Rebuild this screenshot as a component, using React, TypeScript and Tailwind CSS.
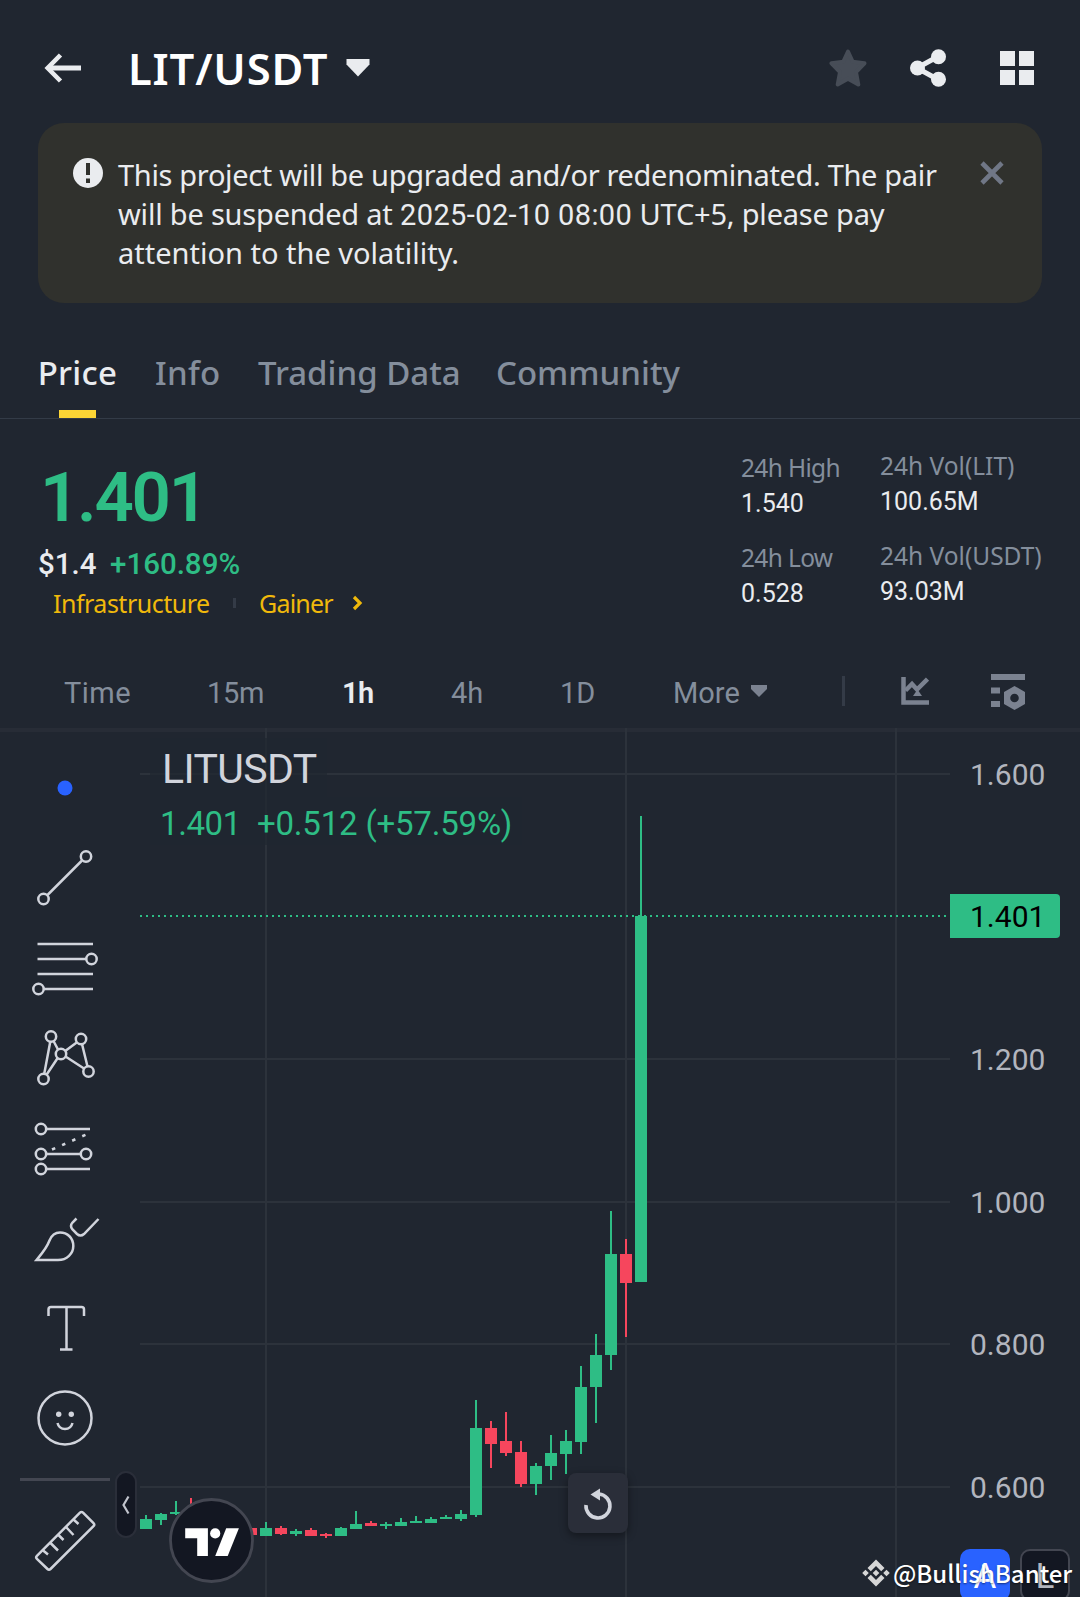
import type { ReactNode } from "react";

const UP = "#2ebd85";
const DOWN = "#f6465d";

// x centre, wick top, body top, body bottom, wick bottom, rising
type Candle = [number, number, number, number, number, boolean];

const candles: Candle[] = [
  [146, 1515, 1519, 1529, 1529, true],
  [161, 1513, 1514, 1520, 1525, true],
  [176, 1501, 1512, 1514, 1515, true],
  [191, 1498, 1508, 1514, 1516, false],
  [251, 1527, 1528, 1535, 1535, false],
  [266, 1522, 1528, 1536, 1536, true],
  [281, 1526, 1528, 1534, 1535, false],
  [296, 1529, 1531, 1534, 1536, true],
  [311, 1528, 1530, 1536, 1536, false],
  [326, 1533, 1534, 1536, 1538, false],
  [341, 1527, 1528, 1536, 1536, true],
  [356, 1511, 1524, 1529, 1529, true],
  [371, 1521, 1523, 1526, 1526, false],
  [386, 1522, 1524, 1526, 1529, true],
  [401, 1518, 1522, 1526, 1526, true],
  [416, 1516, 1521, 1523, 1523, true],
  [431, 1517, 1519, 1523, 1523, true],
  [446, 1515, 1517, 1519, 1519, true],
  [461, 1510, 1514, 1519, 1521, true],
  [476, 1400, 1428, 1515, 1517, true],
  [491, 1421, 1428, 1444, 1468, false],
  [506, 1412, 1441, 1453, 1456, false],
  [521, 1441, 1452, 1484, 1487, false],
  [536, 1463, 1466, 1484, 1495, true],
  [551, 1435, 1453, 1466, 1480, true],
  [566, 1430, 1441, 1454, 1474, true],
  [581, 1366, 1387, 1442, 1454, true],
  [596, 1334, 1355, 1387, 1423, true],
  [611, 1211, 1254, 1355, 1370, true],
  [626, 1239, 1254, 1283, 1337, false],
  [641, 816, 916, 1282, 1282, true],
];

const levels: [number, string][] = [
  [774, "1.600"],
  [1059, "1.200"],
  [1202, "1.000"],
  [1344, "0.800"],
  [1487, "0.600"],
];

function Header() {
  return (
    <header className="flex h-[123px] items-center pt-[13px] pl-11 pr-[46px]">
      <svg className="h-[30px] w-[38px]" viewBox="0 0 38 30" fill="none" stroke="#eaecef">
        <path d="M37 15H4" strokeWidth="5" />
        <path d="M16.500 2 3.700 15l12.800 13" strokeWidth="4.600" />
      </svg>
      <h1 className="ml-[46px] font-['Noto_Sans'] text-[43.5px] leading-[56px] font-semibold tracking-[0.85px] text-white">LIT/USDT</h1>
      <svg className="ml-[18px] h-[18px] w-6" viewBox="0 0 24 18">
        <path d="M.5 0h23v5.500L12 17.500.5 5.500z" fill="#eaecef" />
      </svg>
      <svg className="ml-auto h-[38px] w-[38px]" viewBox="0 0 38 38">
        <path
          d="M19 2.500 23.700 12.800 35.500 14.300 27 23 29.300 35.500 19 29.800 8.700 35.500 11 23 2.500 14.300 14.300 12.800z"
          fill="#474d57"
          stroke="#474d57"
          strokeWidth="4"
          strokeLinejoin="round"
        />
      </svg>
      <svg className="ml-[42px] h-[38px] w-[38px]" viewBox="0 0 38 38" fill="#eaecef">
        <path d="M29 7.500 8 19l21 11.500" fill="none" stroke="#eaecef" strokeWidth="5" />
        <circle cx="29.500" cy="7.700" r="7.500" />
        <circle cx="8.500" cy="19" r="7.500" />
        <circle cx="29.500" cy="30.300" r="7.500" />
      </svg>
      <div className="ml-[53px] grid grid-cols-2 gap-1">
        {[0, 1, 2, 3].map((i) => (
          <span key={i} className="size-[15px] bg-[#eaecef]" />
        ))}
      </div>
    </header>
  );
}

function Notice() {
  return (
    <section className="mx-[38px] flex h-[180px] rounded-[26px] bg-[#30312d] pl-[35px]">
      <svg className="mt-[35px] size-[30px] shrink-0" viewBox="0 0 30 30">
        <circle cx="15" cy="15" r="15" fill="#eaecef" />
        <path d="M15 5v12M15 20.500v4.500" stroke="#30312d" strokeWidth="4" />
      </svg>
      <p className="mt-[33px] ml-[15px] w-[840px] font-['Noto_Sans'] text-[29px] leading-[38.7px] whitespace-nowrap text-[#eaecef]">
        <span className="block tracking-[-0.33px]">This project will be upgraded and/or redenominated. The pair</span>
        <span className="block tracking-[-0.2px]">
          will be suspended at <span className="font-['Roboto'] tracking-[0.4px]">2025-02-10 08:00</span> UTC+5, please pay
        </span>
        <span className="block tracking-[0px]">attention to the volatility.</span>
      </p>
      <svg className="mt-[37px] ml-[21px] size-[26px] shrink-0" viewBox="0 0 26 26">
        <path d="m3 3 20 20M23 3 3 23" stroke="#707786" strokeWidth="4.600" />
      </svg>
    </section>
  );
}

function Tabs() {
  return (
    <nav className="mt-[50px] flex h-[66px] border-b border-[#333b47] pl-[38px] font-['Noto_Sans'] text-[33px] leading-10 font-medium text-[#848e9c]">
      <div className="flex w-[79px] flex-col items-center text-[#eaecef]">
        <span className="tracking-[0.3px]">Price</span>
        <span className="mt-[17px] h-2 w-[37px] bg-[#fcd535]" />
      </div>
      <span className="ml-[38px] w-[103px] tracking-[0.3px]">Info</span>
      <span className="w-[238px]">Trading Data</span>
      <span>Community</span>
    </nav>
  );
}

function Stat({ label, value, tight }: { label: string; value: string; tight?: boolean }) {
  return (
    <div className="h-[90px]">
      <div
        className={
          tight
            ? "font-['Noto_Sans'] text-[24.5px] leading-[30px] tracking-[-0.65px] whitespace-nowrap text-[#848e9c]"
            : "font-['Noto_Sans'] text-[24.5px] leading-[30px] whitespace-nowrap text-[#848e9c]"
        }
      >
        {label}
      </div>
      <div className="mt-[6px] text-[25px] leading-[30px] text-[#eaecef]">{value}</div>
    </div>
  );
}

function Quote() {
  return (
    <section className="flex h-[238px] pl-[38px] font-['Roboto']">
      <div className="w-[703px] pt-[44px]">
        <div className="pl-[2px] text-[69px] leading-[69px] font-semibold tracking-[-2.3px] text-[#2ebd85]">1.401</div>
        <div className="mt-4 flex text-[29.5px] leading-8 font-medium">
          <span className="w-[72px] text-[#eaecef]">$1.4</span>
          <span className="text-[#2ebd85]">+160.89%</span>
        </div>
        <div className="mt-[8px] flex items-center pl-[15px] font-['Noto_Sans'] text-[25px] leading-[30px] text-[#f0b90b]">
          <span className="w-[180px] tracking-[-0.5px]">Infrastructure</span>
          <span className="h-[10px] w-[3px] bg-[#343b47]" />
          <span className="ml-[23px] w-[93px] tracking-[-0.8px]">Gainer</span>
          <svg className="h-4 w-[11px]" viewBox="0 0 11 16">
            <path d="m2 2 6 6-6 6" fill="none" stroke="#f0b90b" strokeWidth="3.200" />
          </svg>
        </div>
      </div>
      <div className="w-[139px] pt-[34px]">
        <Stat label="24h High" value="1.540" tight />
        <Stat label="24h Low" value="0.528" tight />
      </div>
      <div className="pt-[32px]">
        <Stat label="24h Vol(LIT)" value="100.65M" />
        <Stat label="24h Vol(USDT)" value="93.03M" />
      </div>
    </section>
  );
}

function Intervals() {
  return (
    <div className="grid h-[71px] grid-cols-[143px_135px_109px_109px_113px_78px_91px_59px_90px_34px] items-center pl-16 font-['Roboto'] text-[29px] leading-[34px] text-[#848e9c]">
      <span className="tracking-[0.5px]">Time</span>
      <span className="tracking-[-0.3px]">15m</span>
      <span className="font-semibold tracking-[-0.5px] text-[#eaecef]">1h</span>
      <span>4h</span>
      <span>1D</span>
      <span>More</span>
      <svg className="mb-1 h-3 w-4" viewBox="0 0 16 12">
        <path d="M0 0h16v4L8 12 0 4z" fill="#7b8290" />
      </svg>
      <span className="mb-[3px] h-[30px] w-[3px] bg-[#343b47]" />
      <svg className="mb-1 h-7 w-7" viewBox="0 0 28 28" fill="none" stroke="#7b8290" strokeWidth="4.500">
        <path d="M2.500 0v25.500H28" />
        <path d="m4.500 13.500 6.500-6.500 5 5.500L26.500 2" />
        <path d="m16.500 12.500 4.500 6.500h-9z" fill="#7b8290" stroke="none" />
      </svg>
      <svg className="mb-[2px] h-9 w-[34px]" viewBox="0 0 34 36" fill="#7b8290">
        <path d="M0 0h34v6H0zM0 13.500h9v6H0zM0 27h9v6H0z" />
        <path fillRule="evenodd" d="m23.500 12 10.500 6v12l-10.500 6-10.500-6V18zm0 7.700a4.300 4.300 0 1 0 0 8.600 4.300 4.300 0 0 0 0-8.600z" />
      </svg>
    </div>
  );
}

function Tool({ top, children }: { top: number; children: ReactNode }) {
  return (
    <svg
      className="block h-[90px] w-[140px]"
      viewBox={`0 ${top} 140 90`}
      fill="none"
      stroke="#d1d4dc"
      strokeWidth="2.500"
    >
      {children}
    </svg>
  );
}

function DrawingTools() {
  return (
    <aside className="w-[140px] pt-[11px]">
      <Tool top={743}>
        <circle cx="65" cy="788" r="7.500" fill="#2962ff" stroke="none" />
      </Tool>
      <Tool top={833}>
        <circle cx="43.500" cy="899" r="5.200" />
        <circle cx="86" cy="856.500" r="5.200" />
        <path d="m47.500 895 34.500-34.500" />
      </Tool>
      <Tool top={923}>
        <path d="M37.500 944H93M37.500 959h49M37.500 974H93M44 989h49" />
        <circle cx="91.500" cy="959" r="5.200" />
        <circle cx="38.500" cy="989" r="5.200" />
      </Tool>
      <Tool top={1013}>
        <circle cx="51" cy="1036.500" r="5.200" />
        <circle cx="81" cy="1039" r="5.200" />
        <circle cx="61" cy="1054" r="5.200" />
        <circle cx="43.500" cy="1079" r="5.200" />
        <circle cx="88.500" cy="1071.500" r="5.200" />
        <path d="m50.300 1041.500-6.100 32.500M53.500 1041l4.500 8.500M65.200 1051l11.500-8.500M57.700 1058l-11 16.500M65.500 1056.500l18.500 12M82 1044l5.500 22.500" />
      </Tool>
      <Tool top={1103}>
        <circle cx="41" cy="1129" r="5.200" />
        <circle cx="41" cy="1154" r="5.200" />
        <circle cx="86" cy="1154" r="5.200" />
        <circle cx="41" cy="1169" r="5.200" />
        <path d="M46 1129h44M46 1154h35M46 1169h44" />
        <path d="m52 1149.500 35.500-15.500" strokeDasharray="3.500 7.500" strokeWidth="2.600" />
      </Tool>
      <Tool top={1193}>
        <path d="M36.500 1260H58c9 0 15.300-6.500 15.300-14 0-8-5.800-13.500-13.300-13.500-5.500 0-8.500 3-10.500 8-3 8-8 13.500-13 19.500z" />
        <path d="m76.500 1218.500-4 4q-3 3.500 0 7l4.500 4.500q3.500 3 7 0l14.500-15" />
      </Tool>
      <Tool top={1283}>
        <path d="M48.500 1316v-6.500q0-2.500 2.500-2.500h30.500q2.500 0 2.500 2.500v6.500M66.500 1307v42M60 1349.500h12.500" />
      </Tool>
      <Tool top={1373}>
        <circle cx="65" cy="1418" r="26.500" />
        <g fill="#d1d4dc" stroke="none">
          <circle cx="58.700" cy="1414.300" r="2.700" />
          <circle cx="71.300" cy="1414.300" r="2.700" />
        </g>
        <path d="M57.500 1423q1.500 6 7.500 6t7.500-6" />
      </Tool>
      <div className="mt-[15px] ml-5 h-[3px] w-[90px] bg-[#434651]" />
      <Tool top={1481}>
        <path d="M36.900 1555.800 80 1512.700q1.500-1.500 3 0l10.500 10.500q1.500 1.500 0 3l-43 42.800q-1.500 1.500-3 0l-10.600-10.200q-1.500-1.500 0-3z" />
        <path d="m42.500 1550 5.500 4.500M50 1542.500l8 8M58 1534.500l5.500 5.500M66 1527l7.500 8M73.500 1519.500l5 4.500" />
      </Tool>
    </aside>
  );
}

function Chart() {
  return (
    <svg className="block h-[869px] w-[940px]" viewBox="140 728 940 869" shapeRendering="crispEdges">
      {levels.map(([y]) => (
        <path key={y} d={`M140 ${y}H950`} stroke="#2c323b" strokeWidth="2" />
      ))}
      {[266, 626, 896].map((x) => (
        <path key={x} d={`M${x} 728V1597`} stroke="#2c323b" strokeWidth="2" />
      ))}
      <path d="M140 916H950" stroke={UP} strokeWidth="2" strokeDasharray="2 4" />
      {candles.map(([x, high, top, bottom, low, rising]) => (
        <g key={x} fill={rising ? UP : DOWN}>
          <rect x={x - 1} y={high} width="2" height={low - high} />
          <rect x={x - 6} y={top} width="12" height={bottom - top} />
        </g>
      ))}
      <path d="M950 894h106q4 0 4 4v36q0 4-4 4H950z" fill={UP} shapeRendering="auto" />
      <g className="font-['Roboto'] text-[30px]" fill="#b2b5be">
        {levels.map(([y, label]) => (
          <text key={label} x="970" y={y + 11}>
            {label}
          </text>
        ))}
        <text x="970" y="927" fill="#000">
          1.401
        </text>
      </g>
    </svg>
  );
}

function ChartOverlays() {
  return (
    <>
      <div className="absolute top-[10px] left-[150px] font-['Roboto']">
        <div className="h-[59px] w-[177px] bg-[#202630]/70 pl-3 text-[41px] leading-[62px] tracking-[-0.6px] text-[#d1d4dc]">LITUSDT</div>
        <div className="flex h-12 w-[372px] bg-[#202630]/70 pl-[10px] text-[33px] leading-[54px] whitespace-nowrap text-[#2ebd85]">
          <span className="w-[97px] tracking-[-0.4px]">1.401</span>
          <span className="tracking-[-0.2px]">+0.512 (+57.59%)</span>
        </div>
      </div>
      <div className="absolute top-[743px] left-[115px] flex h-[67px] w-[22px] items-center justify-center rounded-full border-2 border-[#2a2e39] bg-[#131722]">
        <svg className="h-5 w-2" viewBox="0 0 8 20">
          <path d="M6.500 1.500 1.500 10l5 8.500" fill="none" stroke="#c1c4cd" strokeWidth="2.200" />
        </svg>
      </div>
      <svg className="absolute top-[770px] left-[169px] size-[85px]" viewBox="168.800 1497.800 85 85">
        <circle cx="211.300" cy="1540.300" r="41" fill="#131722" stroke="#434651" strokeWidth="2.800" />
        <g fill="#fff">
          <path d="M185 1528h22.700v27.700H197V1538h-12z" />
          <circle cx="215" cy="1533.200" r="5.100" />
          <path d="M226 1528h12.700l-11.200 27.700H215z" />
        </g>
      </svg>
      <div className="absolute top-[745px] left-[568px] size-[60px] rounded-lg bg-[#2a2e39] shadow-[0_3px_8px_rgba(0,0,0,0.4)]">
        <svg className="size-[60px]" viewBox="568 1473 60 60">
          <path d="M599 1494a12 12 0 1 1-13 11" fill="none" stroke="#d1d4dc" strokeWidth="3.600" />
          <path d="m590.500 1494.500 9.500-6v12z" fill="#d1d4dc" />
        </svg>
      </div>
      <div className="absolute top-[821px] left-[960px] flex h-[48px] gap-[10px] overflow-hidden font-['Roboto'] text-[35px] leading-[50px]">
        <div className="h-[52px] w-[50px] rounded-[10px] bg-[#2962ff] pt-[3px] text-center text-white">A</div>
        <div className="h-[52px] w-[50px] rounded-[10px] border-2 border-[#434651] bg-[#131722] pt-px text-center text-[#b2b5be]">L</div>
      </div>
      <div className="absolute top-[831px] left-[862px] flex items-center">
        <svg className="size-7" viewBox="0 0 28 28" fill="#d6d6d6">
          <path d="m14 .5 8.500 8.500-3.300 3.300L14 7.100l-5.200 5.200L5.500 9zM14 27.500 5.500 19l3.300-3.300 5.200 5.200 5.200-5.200 3.300 3.300zM14 10.700l3.300 3.300-3.300 3.300-3.300-3.300zM3.500 10.700 6.800 14l-3.300 3.300L.2 14zM24.500 10.700l3.300 3.300-3.300 3.300-3.300-3.300z" />
        </svg>
        <span className="ml-[3px] font-['Noto_Sans_CJK_SC',sans-serif] text-[24px] leading-7 font-medium text-white [text-shadow:0_1px_2px_rgba(0,0,0,0.5)]">
          @BullishBanter
        </span>
      </div>
    </>
  );
}

export default function App() {
  return (
    <main className="h-[1597px] w-[1080px] overflow-hidden bg-[#202630]">
      <Header />
      <Notice />
      <Tabs />
      <Quote />
      <Intervals />
      <section className="relative flex h-[869px] border-t-4 border-[#272c36]">
        <DrawingTools />
        <div className="-mt-1">
          <Chart />
        </div>
        <div className="absolute -top-1 left-0">
          <ChartOverlays />
        </div>
      </section>
    </main>
  );
}
